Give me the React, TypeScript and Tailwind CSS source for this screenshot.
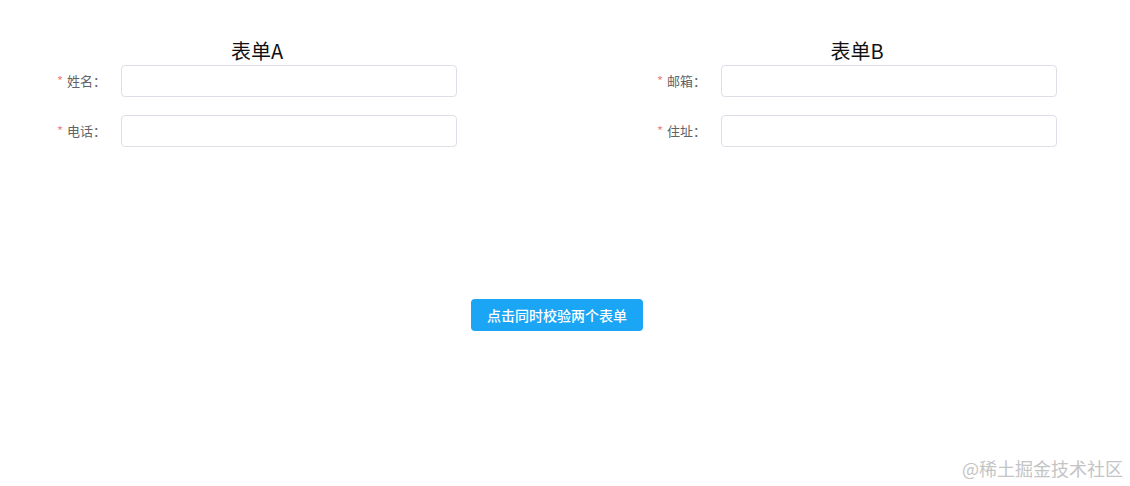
const font = { fontFamily: '"Noto Sans CJK SC", "Liberation Sans", sans-serif' };

function FormItem({ label }: { label: string }) {
  return (
    <div className="flex items-center h-8 mb-[18px]">
      <label className="w-16 shrink-0 text-[13px] text-[#606266] flex items-center">
        <span className="text-[#f08a8a] mr-1 text-[13px]">*</span>
        {label}：
      </label>
      <input className="flex-1 h-8 rounded border border-[#dcdfe6] bg-white px-[15px] text-[13px] outline-none" />
    </div>
  );
}

function DemoForm({ title, fields }: { title: string; fields: string[] }) {
  return (
    <div className="w-[600px] shrink-0 pl-[57px]">
      <div className="w-[400px]">
        <h2 className="text-center text-[20px] leading-[28px] text-[#111]">{title}</h2>
        {fields.map((f) => (
          <FormItem key={f} label={f} />
        ))}
      </div>
    </div>
  );
}

export default function App() {
  return (
    <div className="relative h-[486px] w-full bg-white overflow-hidden" style={font}>
      <div className="flex pt-[37px]">
        <DemoForm title="表单A" fields={["姓名", "电话"]} />
        <DemoForm title="表单B" fields={["邮箱", "住址"]} />
      </div>

      <div className="w-[1114px] flex justify-center mt-[134px]">
        <button className="h-8 w-[172px] rounded bg-[#1aa5f5] text-white text-[14px] font-medium">
          点击同时校验两个表单
        </button>
      </div>

      {/* watermark */}
      <div className="absolute right-[7px] bottom-[6px] text-[18px] text-[#c4c4c4] leading-6">
        @稀土掘金技术社区
      </div>
    </div>
  );
}
